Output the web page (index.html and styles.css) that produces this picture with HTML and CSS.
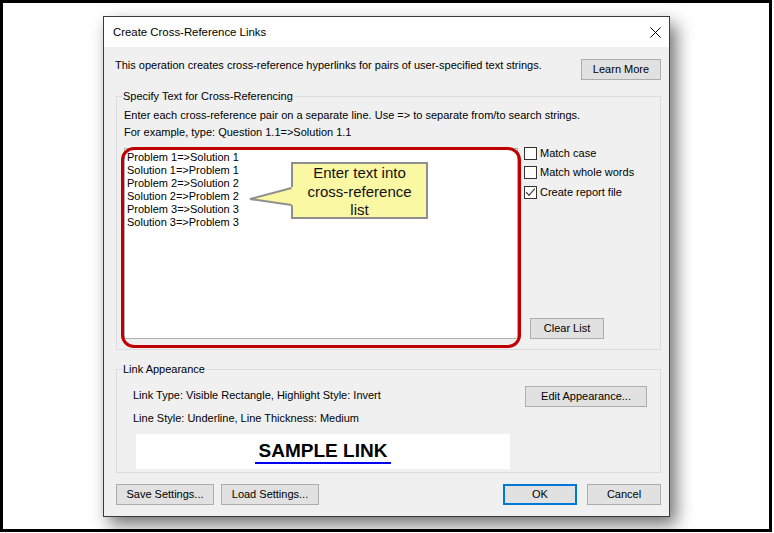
FILE: index.html
```html
<!DOCTYPE html>
<html>
<head>
<meta charset="utf-8">
<title>Create Cross-Reference Links</title>
<link rel="stylesheet" href="styles.css">
</head>
<body>
<div class="frame">
  <div class="dialog">
    <div class="titlebar">
      <span class="title">Create Cross-Reference Links</span>
      <svg class="close" viewBox="0 0 11 11" width="11" height="11"><path d="M0.5 0.5 L10.5 10.5 M10.5 0.5 L0.5 10.5" stroke="#000" stroke-width="1" fill="none"/></svg>
    </div>
    <div class="body">
      <div class="intro-row">
        <p class="intro">This operation creates cross-reference hyperlinks for pairs of user-specified text strings.</p>
        <button class="btn btn-learn">Learn More</button>
      </div>

      <fieldset class="group group-text">
        <legend>Specify Text for Cross-Referencing</legend>
        <div class="g1">
          <p class="hint">Enter each cross-reference pair on a separate line. Use =&gt; to separate from/to search strings.</p>
          <p class="hint">For example, type: Question 1.1=&gt;Solution 1.1</p>
          <div class="editor-row">
            <div class="editor">
              <textarea class="list" spellcheck="false">Problem 1=&gt;Solution 1
Solution 1=&gt;Problem 1
Problem 2=&gt;Solution 2
Solution 2=&gt;Problem 2
Problem 3=&gt;Solution 3
Solution 3=&gt;Problem 3</textarea>
              <div class="annot-outline"></div>
              <div class="callout">
                <svg class="callout-tail" viewBox="0 0 46 28" width="46" height="28"><path d="M1 17 L45 4.6 L45 23.6 Z" fill="#fbf8a4"/><path d="M42.5 6 L1 17 L42.5 23" fill="none" stroke="#8f8f8f" stroke-width="2" stroke-linejoin="miter"/></svg>
                <span class="callout-text">Enter text into<br>cross-reference<br>list</span>
              </div>
            </div>
            <div class="options">
              <label class="check"><span class="box"></span>Match case</label>
              <label class="check"><span class="box"></span>Match whole words</label>
              <label class="check check-report"><span class="box"><svg viewBox="0 0 11 11" width="11" height="11"><path d="M1.2 5.2 L4 8.3 L9.8 1.6" fill="none" stroke="#333" stroke-width="1.1"/></svg></span>Create report file</label>
              <button class="btn btn-clear">Clear List</button>
            </div>
          </div>
        </div>
      </fieldset>

      <fieldset class="group group-link">
        <legend>Link Appearance</legend>
        <div class="g2">
          <div class="appearance-row">
            <p class="info">Link Type: Visible Rectangle, Highlight Style: Invert</p>
            <button class="btn btn-edit">Edit Appearance...</button>
          </div>
          <p class="info info-line">Line Style: Underline, Line Thickness: Medium</p>
          <div class="sample"><span class="sample-link">SAMPLE LINK</span></div>
        </div>
      </fieldset>

      <div class="footer">
        <button class="btn btn-save">Save Settings...</button>
        <button class="btn btn-load">Load Settings...</button>
        <button class="btn btn-ok">OK</button>
        <button class="btn btn-cancel">Cancel</button>
      </div>
    </div>
  </div>
</div>
</body>
</html>
```

FILE: styles.css
```css
body {
  margin: 0;
  font-family: "Liberation Sans", Arial, sans-serif;
}

.frame {
  width: 772px;
  height: 532px;
  box-sizing: border-box;
  border: 3px solid #000;
  background: #fff;
  padding: 13px 0 0 100px;
  overflow: hidden;
}

.dialog {
  width: 567px;
  height: 501px;
  box-sizing: border-box;
  border: 1px solid #3a3a3a;
  background: #f0f0f0;
  box-shadow: 6px 8px 16px rgba(0, 0, 0, 0.55);
  display: flex;
  flex-direction: column;
  font-size: 11px;
  color: #000;
}

.titlebar {
  height: 30px;
  flex: none;
  background: #fff;
  display: flex;
  align-items: center;
  padding: 0 8px 0 9px;
}

.title {
  flex: 1;
  font-size: 11.4px;
}

.close {
  display: block;
}

.body {
  flex: 1;
  padding: 0 8px 11px 12px;
}

p {
  margin: 0;
}

.btn {
  display: block;
  box-sizing: border-box;
  height: 21px;
  padding: 0;
  margin: 0;
  background: #e1e1e1;
  border: 1px solid #adadad;
  font-family: inherit;
  font-size: 11px;
  color: #000;
  text-align: center;
  line-height: 19px;
}

.intro-row {
  display: flex;
  align-items: flex-start;
  margin-top: 11px;
}

.intro {
  flex: 1;
  margin-left: -1px;
  line-height: 14px;
}

.btn-learn {
  width: 80px;
  margin-top: 1px;
}

.group {
  margin: 0;
  border: 1px solid #dcdcdc;
  min-width: 0;
}

.group legend {
  padding: 0 1px;
  line-height: 14px;
  font-size: 11px;
}

.group-text {
  margin-top: 9px;
  padding: 0 0 10px 5px;
}

.g1 {
  padding-top: 4px;
  margin-left: 2px;
}

.hint {
  line-height: 17px;
}

.editor-row {
  display: flex;
  margin-top: 7px;
}

.editor {
  position: relative;
  width: 394px;
  height: 191px;
  flex: none;
}

.list {
  display: block;
  box-sizing: border-box;
  width: 394px;
  height: 191px;
  margin: 0;
  padding: 2px 2px;
  border: 1px solid #b0b0b0;
  background: #fff;
  font-family: "Liberation Sans", Arial, sans-serif;
  font-size: 11px;
  line-height: 13px;
  color: #000;
  resize: none;
  overflow: hidden;
  outline: none;
}

.annot-outline {
  position: absolute;
  left: -3px;
  top: -1px;
  width: 400px;
  height: 201px;
  box-sizing: border-box;
  border: 3px solid #c00000;
  border-radius: 13px;
  pointer-events: none;
}

.callout {
  position: absolute;
  left: 167px;
  top: 14px;
  width: 137px;
  height: 57px;
  box-sizing: border-box;
  border: 2px solid #8f8f8f;
  background: #fbf8a4;
  text-align: center;
}

.callout-tail {
  position: absolute;
  left: -44px;
  top: 18px;
  display: block;
}

.callout-text {
  position: relative;
  display: block;
  font-size: 15px;
  line-height: 18.5px;
  color: #111;
}

.options {
  flex: 1;
  display: flex;
  flex-direction: column;
  align-items: flex-start;
  gap: 6px;
  margin: -1px 0 0 6px;
}

.check {
  display: flex;
  align-items: center;
  gap: 3px;
  height: 13px;
  line-height: 13px;
}

.check-report {
  margin-top: 1px;
}

.box {
  width: 13px;
  height: 13px;
  box-sizing: border-box;
  border: 1px solid #333;
  background: #fff;
  display: flex;
  align-items: center;
  justify-content: center;
}

.box svg {
  display: block;
}

.btn-clear {
  width: 74px;
  margin: auto 0 0 6px;
}

.group-link {
  margin-top: 12px;
  padding: 0 0 3px 5px;
}

.appearance-row {
  display: flex;
  align-items: flex-start;
  margin-top: 10px;
}

.info {
  line-height: 14px;
  margin-left: 11px;
}

.appearance-row .info {
  margin-top: 2px;
}

.btn-edit {
  width: 122px;
  margin: 0 13px 0 auto;
}

.info-line {
  margin-top: 4px;
}

.sample {
  width: 374px;
  height: 35px;
  margin: 9px 0 0 14px;
  background: #fff;
  display: flex;
  justify-content: center;
  align-items: flex-start;
  padding-top: 6px;
  box-sizing: border-box;
}

.sample-link {
  display: inline-block;
  padding: 0 4px;
  font-family: "Liberation Sans", Arial, sans-serif;
  font-weight: bold;
  font-size: 19px;
  line-height: 22px;
  color: #000;
  border-bottom: 2px solid #0000f0;
}

.footer {
  display: flex;
  margin-top: 11px;
}

.btn-save,
.btn-load {
  width: 98px;
}

.btn-load {
  margin-left: 7px;
}

.btn-ok {
  width: 74px;
  margin-left: auto;
  border: 2px solid #0078d7;
  line-height: 17px;
}

.btn-cancel {
  width: 74px;
  margin-left: 10px;
}
```
